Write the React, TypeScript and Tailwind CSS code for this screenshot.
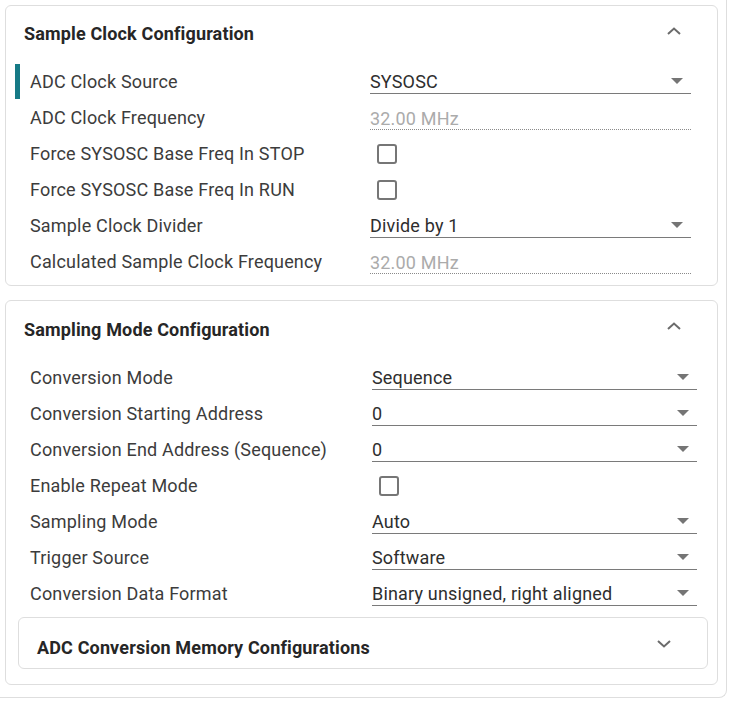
import React from "react";

type Field =
  | { kind: "select"; label: string; value: string; active?: boolean }
  | { kind: "readonly"; label: string; value: string }
  | { kind: "check"; label: string };

const clockFields: Field[] = [
  { kind: "select", label: "ADC Clock Source", value: "SYSOSC", active: true },
  { kind: "readonly", label: "ADC Clock Frequency", value: "32.00 MHz" },
  { kind: "check", label: "Force SYSOSC Base Freq In STOP" },
  { kind: "check", label: "Force SYSOSC Base Freq In RUN" },
  { kind: "select", label: "Sample Clock Divider", value: "Divide by 1" },
  { kind: "readonly", label: "Calculated Sample Clock Frequency", value: "32.00 MHz" },
];

const samplingFields: Field[] = [
  { kind: "select", label: "Conversion Mode", value: "Sequence" },
  { kind: "select", label: "Conversion Starting Address", value: "0" },
  { kind: "select", label: "Conversion End Address (Sequence)", value: "0" },
  { kind: "check", label: "Enable Repeat Mode" },
  { kind: "select", label: "Sampling Mode", value: "Auto" },
  { kind: "select", label: "Trigger Source", value: "Software" },
  { kind: "select", label: "Conversion Data Format", value: "Binary unsigned, right aligned" },
];

const Chevron: React.FC<{ up?: boolean }> = ({ up }) => (
  <svg width="14" height="8" viewBox="0 0 14 8" className="block">
    <path
      d={up ? "M1 7 L7 1.5 L13 7" : "M1 1 L7 6.5 L13 1"}
      fill="none"
      stroke="#6b6b6b"
      strokeWidth="2"
    />
  </svg>
);

const Caret = () => (
  <svg width="12" height="6" viewBox="0 0 12 6" className="block">
    <path d="M0 0 L12 0 L6 6 Z" fill="#757575" />
  </svg>
);

const Row: React.FC<{ field: Field; labelW: string; valueW: string }> = ({ field, labelW, valueW }) => (
  <div className="flex h-9 items-center tracking-[0.18px]">
    <div className={`ml-[9px] h-[35px] w-[5px] ${"active" in field && field.active ? "bg-[#167a86]" : ""}`} />
    <div className={`ml-[10px] ${labelW} pt-[2px] text-[18px] leading-6 text-[#3c3c3c]`}>{field.label}</div>
    <div className={valueW}>
      {field.kind === "select" && (
        <div className="flex h-[26px] items-center justify-between border-b border-[#7a7a7a] pr-2 text-[18px] text-[#2e2e2e]">
          <span className="pt-[2px] leading-6">{field.value}</span>
          <Caret />
        </div>
      )}
      {field.kind === "readonly" && (
        <div className="mt-[2px] flex h-[24px] items-center border-b border-dotted border-[#8a8a8a] text-[18px] text-[#ababab]">
          <span className="pt-[2px] leading-6">{field.value}</span>
        </div>
      )}
      {field.kind === "check" && (
        <div className="pl-[7px] pt-[2px]">
          <div className="h-5 w-5 rounded-[3px] border-2 border-[#767676]" />
        </div>
      )}
    </div>
  </div>
);

const CardHeader: React.FC<{ title: string; h: string; pt: string }> = ({ title, h, pt }) => (
  <div className={`flex ${h} items-start justify-between pl-[18px] pr-9`}>
    <div className={`${pt} text-[18px] leading-6 font-bold tracking-[0.15px] text-[#262626]`}>{title}</div>
    <div className="pt-[21px]">
      <Chevron up />
    </div>
  </div>
);

export default function App() {
  return (
    <div
      className="w-[727px] rounded-br-lg border-r border-b border-[#dedede] bg-white pt-[5px] pr-2 pb-3 pl-[5px]"
      style={{ fontFamily: "Roboto, 'Liberation Sans', sans-serif" }}
    >
      <div className="flex flex-col gap-[14px]">
        <section className="rounded-md border border-[#dedede] pb-[6px]">
          <CardHeader title="Sample Clock Configuration" h="h-[57px]" pt="pt-[16px]" />
          {clockFields.map((f) => (
            <Row key={f.label} field={f} labelW="w-[340px]" valueW="w-[321px]" />
          ))}
        </section>

        <section className="rounded-md border border-[#dedede] pb-[15px]">
          <CardHeader title="Sampling Mode Configuration" h="h-[58px]" pt="pt-[17px]" />
          {samplingFields.map((f) => (
            <Row key={f.label} field={f} labelW="w-[342px]" valueW="w-[325px]" />
          ))}
          <div className="mt-[6px] mr-[9px] ml-3 flex h-[52px] items-start justify-between rounded-md border border-[#dedede] pl-[18px] pr-9">
            <div className="pt-[18px] text-[18px] leading-6 font-bold tracking-[0.15px] text-[#262626]">
              ADC Conversion Memory Configurations
            </div>
            <div className="pt-[22px]">
              <Chevron />
            </div>
          </div>
        </section>
      </div>
    </div>
  );
}
